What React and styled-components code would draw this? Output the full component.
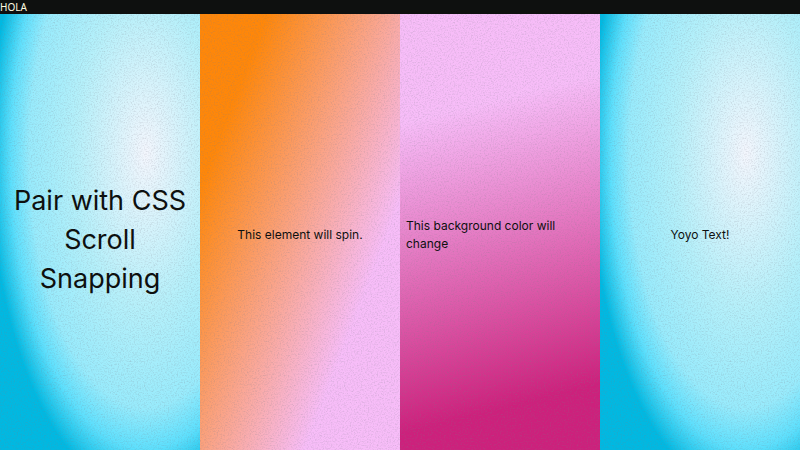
import styled, { createGlobalStyle } from "styled-components";

const gradients = {
	blue: "radial-gradient(104% 101% at 73% 31%, #f3f6fd 0%, #b5f0fa 34%, #98ebfc 56%, #5ee0fd 65%, #00b9e2 75%)",
	orange: "linear-gradient(111deg, #ff8709 18%, #f7bdf8 73%)",
	pink: "linear-gradient(166deg, #f7bdf8 22%, #cd207c 84%)",
};

export default function App() {
	return (
		<Page>
			<GlobalStyle />
			<Header>HOLA</Header>

			<GrainDefs aria-hidden="true">
				<filter id="grain" x="0" y="0" width="100%" height="100%">
					<feTurbulence type="fractalNoise" baseFrequency="0.7" numOctaves="3" />
					<feColorMatrix values="0 0 0 0 0.2  0 0 0 0 0.2  0 0 0 0 0.25  1.6 0 0 0 -0.72" />
				</filter>
			</GrainDefs>

			<Panels>
				<Panel color="blue">
					<Title>Pair with CSS Scroll Snapping</Title>
				</Panel>
				<Panel color="orange">
					<Text>This element will spin.</Text>
				</Panel>
				<Panel color="pink">
					<Text>This background color will change</Text>
				</Panel>
				<Panel color="blue">
					<Text>Yoyo Text!</Text>
				</Panel>
			</Panels>
		</Page>
	);
}

function Panel({ color, children }) {
	return (
		<PanelContainer $color={color}>
			<Grain aria-hidden="true">
				<rect width="100%" height="100%" filter="url(#grain)" />
			</Grain>
			{children}
		</PanelContainer>
	);
}

const GlobalStyle = createGlobalStyle`
	* {
		box-sizing: border-box;
	}

	html {
		scrollbar-width: none;
	}

	body {
		margin: 0;
		background-color: #0e100f;
		font-family: Inter, "Liberation Sans", sans-serif;
	}
`;

const Page = styled.div`
	display: flex;
	flex-direction: column;
`;

const Header = styled.header`
	background-color: #0e100f;
	color: #fffce1;
	font-family: "Noto Sans", sans-serif;
	font-size: 10px;
	line-height: 14px;
`;

const Panels = styled.main`
	min-height: 100vh;
	display: grid;
	grid-template-columns: repeat(4, 1fr);
`;

const PanelContainer = styled.section`
	position: relative;
	padding: 6px;
	display: flex;
	align-items: center;
	justify-content: center;
	background: ${({ $color }) => gradients[$color]};
	color: #0e100f;
`;

const GrainDefs = styled.svg`
	position: absolute;
	width: 0;
	height: 0;
`;

const Grain = styled.svg`
	position: absolute;
	inset: 0;
	width: 100%;
	height: 100%;
	opacity: 0.35;
`;

const Title = styled.h1`
	margin: 0;
	position: relative;
	font-size: 27px;
	font-weight: 400;
	line-height: 39px;
	text-align: center;
`;

const Text = styled.p`
	margin: 0;
	padding-bottom: 8px;
	position: relative;
	font-size: 12px;
	line-height: 18px;
`;
